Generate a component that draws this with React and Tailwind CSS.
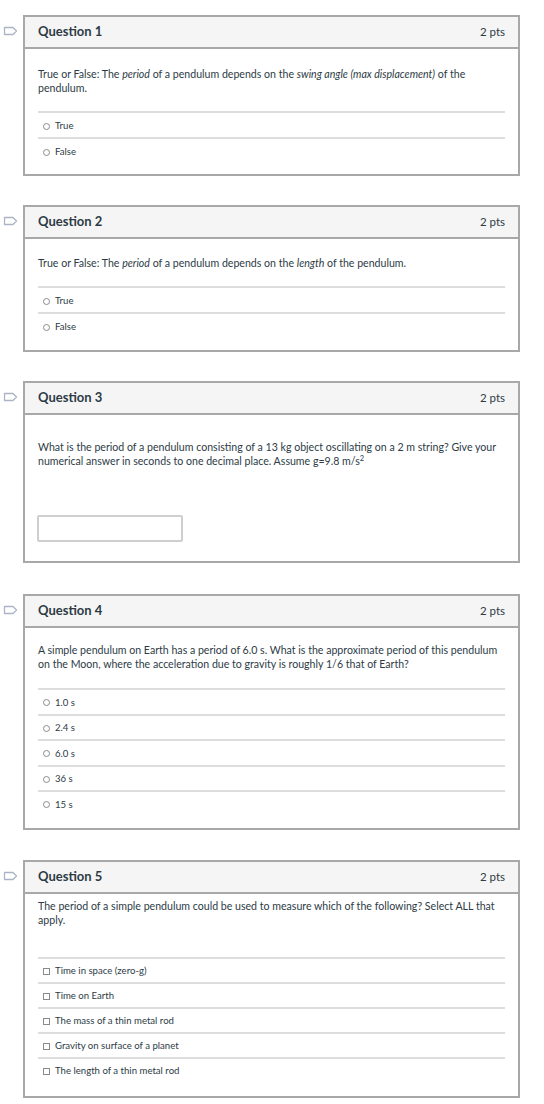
import React from "react";

const FONT = { fontFamily: "Lato, 'Open Sans', 'Liberation Sans', sans-serif" };

function Flag() {
  return (
    <svg width="15" height="10" viewBox="0 0 15 10" className="block">
      <path d="M1.5 1.5 H10 L13.5 5 L10 8.5 H1.5 Z" fill="none" stroke="#aab4c4" strokeWidth="1.3" strokeLinejoin="round" />
    </svg>
  );
}

function Radio() {
  return <span className="inline-block w-[7px] h-[7px] rounded-full border border-[#8a8a8a] mr-[5px] shrink-0" />;
}
function Check() {
  return <span className="inline-block w-[7px] h-[7px] border border-[#8a8a8a] mr-[5px] shrink-0" />;
}

function Question({ num, mt, children }) {
  return (
    <div className={`flex ${mt}`}>
      <div className="w-[23px] shrink-0 pl-[3px] h-[32px] flex items-center">
        <Flag />
      </div>
      <div className="w-[497px] border-2 border-[#a8a8a8] bg-white">
        <div className="h-[30px] bg-[#f5f5f5] border-b-2 border-[#a8a8a8] flex items-center justify-between px-[13px] box-content">
          <span className="text-[13px] font-bold text-[#2d3b45]">Question {num}</span>
          <span className="text-[11.5px] text-[#2d3b45]">2 pts</span>
        </div>
        {children}
      </div>
    </div>
  );
}

function Answers({ items, kind, rowH = "h-[24px] pt-[3px]" }) {
  return (
    <div>
      {items.map((t) => (
        <div key={t}>
          <div className="h-[2px] bg-[#dddddd]" />
          <div className={`${rowH} flex items-center pl-[5px] text-[9.6px] text-[#2d3b45]`}>
            {kind === "radio" ? <Radio /> : <Check />}
            <span>{t}</span>
          </div>
        </div>
      ))}
    </div>
  );
}

const P = "text-[10.6px] leading-[14px] text-[#2d3b45] whitespace-nowrap";

export default function App() {
  return (
    <div className="w-[544px] h-[1104px] bg-white overflow-hidden pt-[15px]" style={FONT}>
      <Question num={1} mt="mt-0">
        <div className="px-[13px] pt-[18px] pb-[11px]">
          <p className={P}>
            True or False: The <i>period</i> of a pendulum depends on the <i>swing angle (max displacement)</i> of the
            <br />
            pendulum.
          </p>
          <div className="mt-[16px]">
            <Answers items={["True", "False"]} kind="radio" />
          </div>
        </div>
      </Question>

      <Question num={2} mt="mt-[29px]">
        <div className="px-[13px] pt-[17px] pb-[12px]">
          <p className={P}>
            True or False: The <i>period</i> of a pendulum depends on the <i>length</i> of the pendulum.
          </p>
          <div className="mt-[16px]">
            <Answers items={["True", "False"]} kind="radio" />
          </div>
        </div>
      </Question>

      <Question num={3} mt="mt-[29px]">
        <div className="px-[13px] pt-[25px] pb-[19px]">
          <p className={P}>
            What is the period of a pendulum consisting of a 13 kg object oscillating on a 2 m string? Give your
            <br />
            numerical answer in seconds to one decimal place. Assume g=9.8 m/s
            <span className="relative -top-[4px] text-[7.5px] leading-none">2</span>
          </p>
          <div className="mt-[47px] w-[146px] h-[27px] border-2 border-[#cfcfcf] rounded-[2px] -ml-[1px]" />
        </div>
      </Question>

      <Question num={4} mt="mt-[31px]">
        <div className="px-[13px] pt-[15px] pb-[12px]">
          <p className={P}>
            A simple pendulum on Earth has a period of 6.0 s. What is the approximate period of this pendulum
            <br />
            on the Moon, where the acceleration due to gravity is roughly 1/6 that of Earth?
          </p>
          <div className="mt-[17px]">
            <Answers items={["1.0 s", "2.4 s", "6.0 s", "36 s", "15 s"]} kind="radio" rowH="h-[23.5px] pt-[2px]" />
          </div>
        </div>
      </Question>

      <Question num={5} mt="mt-[30px]">
        <div className="px-[13px] pt-[5px] pb-[14px]">
          <p className={P}>
            The period of a simple pendulum could be used to measure which of the following? Select ALL that
            <br />
            apply.
          </p>
          <div className="mt-[30px]">
            <Answers items={["Time in space (zero-g)", "Time on Earth", "The mass of a thin metal rod", "Gravity on surface of a planet", "The length of a thin metal rod"]} kind="check" rowH="h-[23px] pt-[2px]" />
          </div>
        </div>
      </Question>
    </div>
  );
}
